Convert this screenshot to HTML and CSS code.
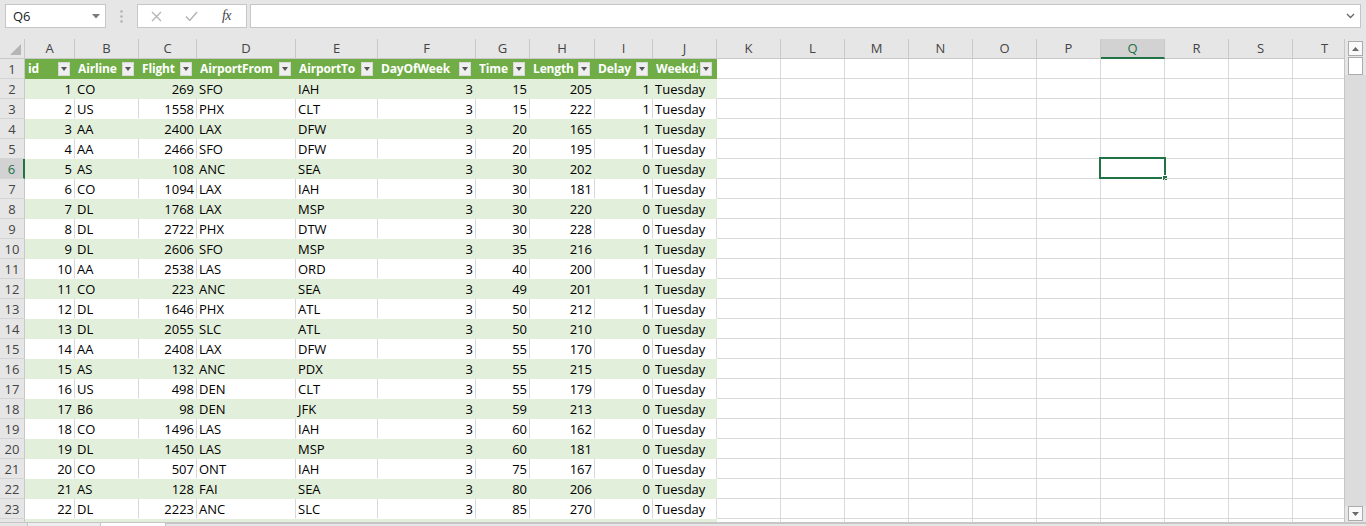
FILE: index.html
```html
<!DOCTYPE html>
<html>
<head>
<meta charset="utf-8">
<link rel="stylesheet" href="styles.css">
</head>
<body>
<div class="formulabar">
  <div class="namebox"><span>Q6</span><svg width="8" height="5" viewBox="0 0 8 5"><path d="M0 0h8L4 4.5z" fill="#7a7a7a"/></svg></div>
  <div class="sep"><svg width="3" height="13" viewBox="0 0 3 13"><circle cx="1.5" cy="1.5" r="1.2" fill="#b0b0b0"/><circle cx="1.5" cy="6.5" r="1.2" fill="#b0b0b0"/><circle cx="1.5" cy="11.5" r="1.2" fill="#b0b0b0"/></svg></div>
  <div class="fxbtns">
    <span class="slot"><svg width="11" height="11" viewBox="0 0 11 11"><path d="M1 1L10 10M10 1L1 10" stroke="#b4b4b4" stroke-width="1.3"/></svg></span>
    <span class="slot"><svg width="13" height="11" viewBox="0 0 13 11"><path d="M1 5.5L4.8 9.5L12 1" stroke="#b4b4b4" stroke-width="1.5" fill="none"/></svg></span>
    <span class="slot fx">fx</span>
  </div>
  <div class="finput"><svg width="9" height="6" viewBox="0 0 9 6"><path d="M1 1L4.5 4.5L8 1" stroke="#666" stroke-width="1.3" fill="none"/></svg></div>
</div>
<div class="sheet">
  <div class="grid">
    <div class="row colhdr">
      <span class="corner"><svg width="11" height="11" viewBox="0 0 11 11"><path d="M11 0V11H0z" fill="#b5b5b5"/></svg></span>
      <span>A</span><span>B</span><span>C</span><span>D</span><span>E</span><span>F</span><span>G</span><span>H</span><span>I</span><span>J</span><span>K</span><span>L</span><span>M</span><span>N</span><span>O</span><span>P</span><span class="selcol">Q</span><span>R</span><span>S</span><span>T</span>
    </div>
    <div class="row thead">
      <span class="rh">1</span>
      <span class="h"><b>id</b><i class="fb"></i></span>
      <span class="h"><b>Airline</b><i class="fb"></i></span>
      <span class="h"><b>Flight</b><i class="fb"></i></span>
      <span class="h"><b>AirportFrom</b><i class="fb"></i></span>
      <span class="h"><b>AirportTo</b><i class="fb"></i></span>
      <span class="h"><b>DayOfWeek</b><i class="fb"></i></span>
      <span class="h"><b>Time</b><i class="fb"></i></span>
      <span class="h"><b>Length</b><i class="fb"></i></span>
      <span class="h"><b>Delay</b><i class="fb"></i></span>
      <span class="h"><b>Weekday</b><i class="fb"></i></span>
      <span></span><span></span><span></span><span></span><span></span><span></span><span></span><span></span><span></span><span></span>
    </div>
    <div class="row band"><span class="rh">2</span><span class="t n">1</span><span class="t">CO</span><span class="t n">269</span><span class="t">SFO</span><span class="t">IAH</span><span class="t n">3</span><span class="t n">15</span><span class="t n">205</span><span class="t n">1</span><span class="t">Tuesday</span><span></span><span></span><span></span><span></span><span></span><span></span><span></span><span></span><span></span><span></span></div>
    <div class="row"><span class="rh">3</span><span class="t n">2</span><span class="t">US</span><span class="t n">1558</span><span class="t">PHX</span><span class="t">CLT</span><span class="t n">3</span><span class="t n">15</span><span class="t n">222</span><span class="t n">1</span><span class="t">Tuesday</span><span></span><span></span><span></span><span></span><span></span><span></span><span></span><span></span><span></span><span></span></div>
    <div class="row band"><span class="rh">4</span><span class="t n">3</span><span class="t">AA</span><span class="t n">2400</span><span class="t">LAX</span><span class="t">DFW</span><span class="t n">3</span><span class="t n">20</span><span class="t n">165</span><span class="t n">1</span><span class="t">Tuesday</span><span></span><span></span><span></span><span></span><span></span><span></span><span></span><span></span><span></span><span></span></div>
    <div class="row"><span class="rh">5</span><span class="t n">4</span><span class="t">AA</span><span class="t n">2466</span><span class="t">SFO</span><span class="t">DFW</span><span class="t n">3</span><span class="t n">20</span><span class="t n">195</span><span class="t n">1</span><span class="t">Tuesday</span><span></span><span></span><span></span><span></span><span></span><span></span><span></span><span></span><span></span><span></span></div>
    <div class="row band"><span class="rh selrow">6</span><span class="t n">5</span><span class="t">AS</span><span class="t n">108</span><span class="t">ANC</span><span class="t">SEA</span><span class="t n">3</span><span class="t n">30</span><span class="t n">202</span><span class="t n">0</span><span class="t">Tuesday</span><span></span><span></span><span></span><span></span><span></span><span></span><span class="active"><i class="selbox"><i class="handle"></i></i></span><span></span><span></span><span></span></div>
    <div class="row"><span class="rh">7</span><span class="t n">6</span><span class="t">CO</span><span class="t n">1094</span><span class="t">LAX</span><span class="t">IAH</span><span class="t n">3</span><span class="t n">30</span><span class="t n">181</span><span class="t n">1</span><span class="t">Tuesday</span><span></span><span></span><span></span><span></span><span></span><span></span><span></span><span></span><span></span><span></span></div>
    <div class="row band"><span class="rh">8</span><span class="t n">7</span><span class="t">DL</span><span class="t n">1768</span><span class="t">LAX</span><span class="t">MSP</span><span class="t n">3</span><span class="t n">30</span><span class="t n">220</span><span class="t n">0</span><span class="t">Tuesday</span><span></span><span></span><span></span><span></span><span></span><span></span><span></span><span></span><span></span><span></span></div>
    <div class="row"><span class="rh">9</span><span class="t n">8</span><span class="t">DL</span><span class="t n">2722</span><span class="t">PHX</span><span class="t">DTW</span><span class="t n">3</span><span class="t n">30</span><span class="t n">228</span><span class="t n">0</span><span class="t">Tuesday</span><span></span><span></span><span></span><span></span><span></span><span></span><span></span><span></span><span></span><span></span></div>
    <div class="row band"><span class="rh">10</span><span class="t n">9</span><span class="t">DL</span><span class="t n">2606</span><span class="t">SFO</span><span class="t">MSP</span><span class="t n">3</span><span class="t n">35</span><span class="t n">216</span><span class="t n">1</span><span class="t">Tuesday</span><span></span><span></span><span></span><span></span><span></span><span></span><span></span><span></span><span></span><span></span></div>
    <div class="row"><span class="rh">11</span><span class="t n">10</span><span class="t">AA</span><span class="t n">2538</span><span class="t">LAS</span><span class="t">ORD</span><span class="t n">3</span><span class="t n">40</span><span class="t n">200</span><span class="t n">1</span><span class="t">Tuesday</span><span></span><span></span><span></span><span></span><span></span><span></span><span></span><span></span><span></span><span></span></div>
    <div class="row band"><span class="rh">12</span><span class="t n">11</span><span class="t">CO</span><span class="t n">223</span><span class="t">ANC</span><span class="t">SEA</span><span class="t n">3</span><span class="t n">49</span><span class="t n">201</span><span class="t n">1</span><span class="t">Tuesday</span><span></span><span></span><span></span><span></span><span></span><span></span><span></span><span></span><span></span><span></span></div>
    <div class="row"><span class="rh">13</span><span class="t n">12</span><span class="t">DL</span><span class="t n">1646</span><span class="t">PHX</span><span class="t">ATL</span><span class="t n">3</span><span class="t n">50</span><span class="t n">212</span><span class="t n">1</span><span class="t">Tuesday</span><span></span><span></span><span></span><span></span><span></span><span></span><span></span><span></span><span></span><span></span></div>
    <div class="row band"><span class="rh">14</span><span class="t n">13</span><span class="t">DL</span><span class="t n">2055</span><span class="t">SLC</span><span class="t">ATL</span><span class="t n">3</span><span class="t n">50</span><span class="t n">210</span><span class="t n">0</span><span class="t">Tuesday</span><span></span><span></span><span></span><span></span><span></span><span></span><span></span><span></span><span></span><span></span></div>
    <div class="row"><span class="rh">15</span><span class="t n">14</span><span class="t">AA</span><span class="t n">2408</span><span class="t">LAX</span><span class="t">DFW</span><span class="t n">3</span><span class="t n">55</span><span class="t n">170</span><span class="t n">0</span><span class="t">Tuesday</span><span></span><span></span><span></span><span></span><span></span><span></span><span></span><span></span><span></span><span></span></div>
    <div class="row band"><span class="rh">16</span><span class="t n">15</span><span class="t">AS</span><span class="t n">132</span><span class="t">ANC</span><span class="t">PDX</span><span class="t n">3</span><span class="t n">55</span><span class="t n">215</span><span class="t n">0</span><span class="t">Tuesday</span><span></span><span></span><span></span><span></span><span></span><span></span><span></span><span></span><span></span><span></span></div>
    <div class="row"><span class="rh">17</span><span class="t n">16</span><span class="t">US</span><span class="t n">498</span><span class="t">DEN</span><span class="t">CLT</span><span class="t n">3</span><span class="t n">55</span><span class="t n">179</span><span class="t n">0</span><span class="t">Tuesday</span><span></span><span></span><span></span><span></span><span></span><span></span><span></span><span></span><span></span><span></span></div>
    <div class="row band"><span class="rh">18</span><span class="t n">17</span><span class="t">B6</span><span class="t n">98</span><span class="t">DEN</span><span class="t">JFK</span><span class="t n">3</span><span class="t n">59</span><span class="t n">213</span><span class="t n">0</span><span class="t">Tuesday</span><span></span><span></span><span></span><span></span><span></span><span></span><span></span><span></span><span></span><span></span></div>
    <div class="row"><span class="rh">19</span><span class="t n">18</span><span class="t">CO</span><span class="t n">1496</span><span class="t">LAS</span><span class="t">IAH</span><span class="t n">3</span><span class="t n">60</span><span class="t n">162</span><span class="t n">0</span><span class="t">Tuesday</span><span></span><span></span><span></span><span></span><span></span><span></span><span></span><span></span><span></span><span></span></div>
    <div class="row band"><span class="rh">20</span><span class="t n">19</span><span class="t">DL</span><span class="t n">1450</span><span class="t">LAS</span><span class="t">MSP</span><span class="t n">3</span><span class="t n">60</span><span class="t n">181</span><span class="t n">0</span><span class="t">Tuesday</span><span></span><span></span><span></span><span></span><span></span><span></span><span></span><span></span><span></span><span></span></div>
    <div class="row"><span class="rh">21</span><span class="t n">20</span><span class="t">CO</span><span class="t n">507</span><span class="t">ONT</span><span class="t">IAH</span><span class="t n">3</span><span class="t n">75</span><span class="t n">167</span><span class="t n">0</span><span class="t">Tuesday</span><span></span><span></span><span></span><span></span><span></span><span></span><span></span><span></span><span></span><span></span></div>
    <div class="row band"><span class="rh">22</span><span class="t n">21</span><span class="t">AS</span><span class="t n">128</span><span class="t">FAI</span><span class="t">SEA</span><span class="t n">3</span><span class="t n">80</span><span class="t n">206</span><span class="t n">0</span><span class="t">Tuesday</span><span></span><span></span><span></span><span></span><span></span><span></span><span></span><span></span><span></span><span></span></div>
    <div class="row"><span class="rh">23</span><span class="t n">22</span><span class="t">DL</span><span class="t n">2223</span><span class="t">ANC</span><span class="t">SLC</span><span class="t n">3</span><span class="t n">85</span><span class="t n">270</span><span class="t n">0</span><span class="t">Tuesday</span><span></span><span></span><span></span><span></span><span></span><span></span><span></span><span></span><span></span><span></span></div>
    <div class="row band"><span class="rh"></span><span class="t"></span><span class="t"></span><span class="t"></span><span class="t"></span><span class="t"></span><span class="t"></span><span class="t"></span><span class="t"></span><span class="t"></span><span class="t"></span><span></span><span></span><span></span><span></span><span></span><span></span><span></span><span></span><span></span><span></span></div>
  </div>
  <div class="vscroll">
    <div class="sbtn"><svg width="7" height="4" viewBox="0 0 7 4"><path d="M0 4h7L3.5 0z" fill="#6a6a6a"/></svg></div>
    <div class="thumb"></div>
    <div class="track"></div>
    <div class="sbtn"><svg width="7" height="4" viewBox="0 0 7 4"><path d="M0 0h7L3.5 4z" fill="#6a6a6a"/></svg></div>
  </div>
</div>
<div class="tabbar">
  <div class="nav"></div>
  <div class="tab"></div>
  <div class="tab on"></div>
  <div class="hs"></div>
</div>
</body>
</html>
```
FILE: styles.css
```css
html, body {
  margin: 0;
  padding: 0;
}
body {
  width: 1366px;
  height: 526px;
  overflow: hidden;
  background: #e6e6e6;
  font-family: "Open Sans", "Liberation Sans", sans-serif;
  font-size: 13px;
  color: #000;
}

/* formula bar */
.formulabar {
  height: 39px;
  box-sizing: border-box;
  padding-top: 4px;
  display: flex;
  align-items: flex-start;
}
.namebox {
  margin-left: 5px;
  width: 101px;
  height: 24px;
  box-sizing: border-box;
  background: #fff;
  border: 1px solid #c6c6c6;
  display: flex;
  align-items: center;
  justify-content: space-between;
  padding: 0 5px 0 7px;
  color: #222;
}
.sep {
  width: 31px;
  height: 24px;
  display: flex;
  align-items: center;
  justify-content: center;
}
.fxbtns {
  width: 110px;
  height: 24px;
  box-sizing: border-box;
  background: #fff;
  border: 1px solid #c6c6c6;
  display: flex;
  align-items: center;
  padding-left: 1px;
}
.slot {
  width: 35px;
  height: 22px;
  display: flex;
  align-items: center;
  justify-content: center;
}
.fx {
  font-family: "Liberation Serif", serif;
  font-style: italic;
  font-size: 14px;
  color: #444;
  letter-spacing: -0.5px;
}
.finput {
  margin-left: 3px;
  width: 1111px;
  height: 24px;
  box-sizing: border-box;
  background: #fff;
  border: 1px solid #c6c6c6;
  display: flex;
  align-items: center;
  justify-content: flex-end;
  padding-right: 5px;
}

/* sheet */
.sheet {
  display: flex;
  height: 483px;
}
.grid {
  width: 1345px;
  box-sizing: border-box;
  border-right: 1px solid #c6c6c6;
  overflow: hidden;
  background: #fff;
}
.row {
  display: grid;
  grid-template-columns: 25px 50px 64px 58px 99px 82px 98px 54px 65px 58px 64px repeat(10, 64px);
  width: max-content;
  height: 20px;
}
.row > span {
  position: relative;
  box-sizing: border-box;
  height: 20px;
  border-right: 1px solid #d9d9d9;
  border-bottom: 1px solid #d9d9d9;
  padding: 0 2px;
  line-height: 21px;
  white-space: nowrap;
  overflow: hidden;
}
.row > .n { text-align: right; }
.row > .t { border-bottom-color: #fff; }
.band > .t {
  background: #e2efda;
  border-color: #e2efda;
}

/* column headers */
.colhdr > span {
  background: #e6e6e6;
  border-right-color: #c8c8c8;
  border-bottom-color: #c8c8c8;
  text-align: center;
  color: #444;
  line-height: 19px;
}
.colhdr > .corner {
  display: flex;
  align-items: flex-end;
  justify-content: flex-end;
  padding: 0 3px 3px 0;
}
.colhdr > .selcol {
  background: #d2d2d2;
  color: #217346;
  border-bottom: 2px solid #217346;
}

/* row headers */
.row > .rh {
  background: #e6e6e6;
  border-right-color: #c8c8c8;
  border-bottom-color: #d4d4d4;
  text-align: center;
  color: #444;
  padding: 0;
}
.row > .selrow {
  background: #d2d2d2;
  color: #217346;
  border-right: 2px solid #217346;
}

/* table header */
.thead > .h {
  background: #70ad47;
  border-color: #70ad47;
  color: #fff;
  display: flex;
  align-items: center;
  padding: 0 4px 0 3px;
}
.h b {
  flex: 1;
  min-width: 0;
  overflow: hidden;
  font-weight: 700;
  font-size: 12px;
  letter-spacing: -0.15px;
  line-height: 20px;
  padding-top: 1px;
}
.fb {
  flex: none;
  width: 12px;
  height: 14px;
  box-sizing: border-box;
  margin-left: 2px;
  margin-top: 1px;
  background: #efefef;
  border: 1px solid #d8d8d8;
  display: flex;
  align-items: center;
  justify-content: center;
}
.fb::after {
  content: "";
  border-left: 3.5px solid transparent;
  border-right: 3.5px solid transparent;
  border-top: 4px solid #555;
}

/* active cell */
.row > .active { overflow: visible; }
.selbox {
  position: absolute;
  left: -2px;
  top: -2px;
  width: 67px;
  height: 22px;
  box-sizing: border-box;
  border: 2px solid #217346;
}
.handle {
  position: absolute;
  right: -4px;
  bottom: -4px;
  width: 6px;
  height: 6px;
  box-sizing: border-box;
  background: #217346;
  border: 1px solid #fff;
}

/* vertical scrollbar */
.vscroll {
  width: 21px;
  box-sizing: border-box;
  padding: 2px 3px 1px 3px;
  display: flex;
  flex-direction: column;
  background: #e6e6e6;
}
.sbtn {
  height: 15px;
  box-sizing: border-box;
  background: #f9f9f9;
  border: 1px solid #ababab;
  display: flex;
  align-items: center;
  justify-content: center;
  flex: none;
}
.thumb {
  height: 18px;
  margin-top: 1px;
  box-sizing: border-box;
  background: #fff;
  border: 1px solid #ababab;
  flex: none;
}
.track {
  flex: 1;
  background: #dcdcdc;
  margin: 0 -3px;
}

/* bottom tabs */
.tabbar {
  height: 30px;
  display: flex;
  border-top: 1px solid #c6c6c6;
  background: #e6e6e6;
}
.nav { width: 27px; }
.tab {
  width: 73px;
  box-sizing: border-box;
  border-left: 1px solid #c6c6c6;
  background: #eeeeee;
}
.tab.on {
  width: 65px;
  background: #fff;
}
.hs {
  flex: 1;
  border-left: 1px solid #c6c6c6;
  border-top: 1px solid #c6c6c6;
}
```
